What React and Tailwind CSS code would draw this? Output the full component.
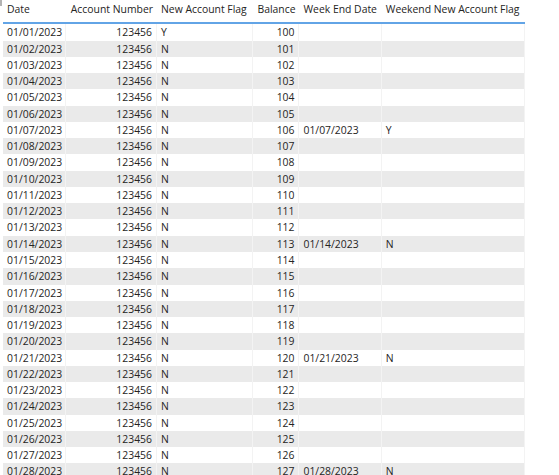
import React from "react";

const columns = [
  { key: "date", label: "Date", width: "w-[63.3px]", align: "text-left" },
  { key: "account", label: "Account Number", width: "w-[90.7px]", align: "text-right" },
  { key: "flag", label: "New Account Flag", width: "w-[96.5px]", align: "text-left" },
  { key: "balance", label: "Balance", width: "w-[46px]", align: "text-right" },
  { key: "weekEnd", label: "Week End Date", width: "w-[82.3px]", align: "text-left" },
  { key: "weekendFlag", label: "Weekend New Account Flag", width: "w-[143.2px]", align: "text-left" },
];

const rows = Array.from({ length: 28 }, (_, i) => {
  const day = String(i + 1).padStart(2, "0");
  const date = `01/${day}/2023`;
  const isWeekEnd = (i + 1) % 7 === 0;
  return {
    date,
    account: "123456",
    flag: i === 0 ? "Y" : "N",
    balance: 100 + i,
    weekEnd: isWeekEnd ? date : "",
    weekendFlag: isWeekEnd ? (i === 6 ? "Y" : "N") : "",
  };
});

export default function App() {
  return (
    <div
      className="h-[475px] w-[559px] overflow-hidden bg-white text-[#252423] text-[10.4px]"
      style={{ fontFamily: '"Open Sans", "Noto Sans", sans-serif' }}
    >
      <div className="flex">
        <div className="w-[3px] shrink-0">
          <div className="h-[6px] w-[2px] bg-[#b3b3b3]" />
        </div>

        <div className="w-[522px]">
          <div className="flex h-[24.3px] border-b-2 border-[#62a4e6]">
            {columns.map((c) => (
              <div
                key={c.key}
                className={`${c.width} shrink-0 px-[4px] pt-[1px] leading-[16px] whitespace-nowrap ${
                  c.key === "date" ? "text-left" : c.align
                }`}
              >
                {c.label}
              </div>
            ))}
          </div>

          {rows.map((r, i) => (
            <div
              key={r.date}
              className={`flex h-[16.28px] ${i % 2 === 1 ? "bg-[#eaeaea]" : "bg-white"}`}
            >
              {columns.map((c) => (
                <div
                  key={c.key}
                  className={`${c.width} shrink-0 px-[4px] leading-[16.28px] whitespace-nowrap border-r border-[#f3f3f3] ${c.align}`}
                >
                  {r[c.key]}
                </div>
              ))}
            </div>
          ))}
        </div>
      </div>
    </div>
  );
}
